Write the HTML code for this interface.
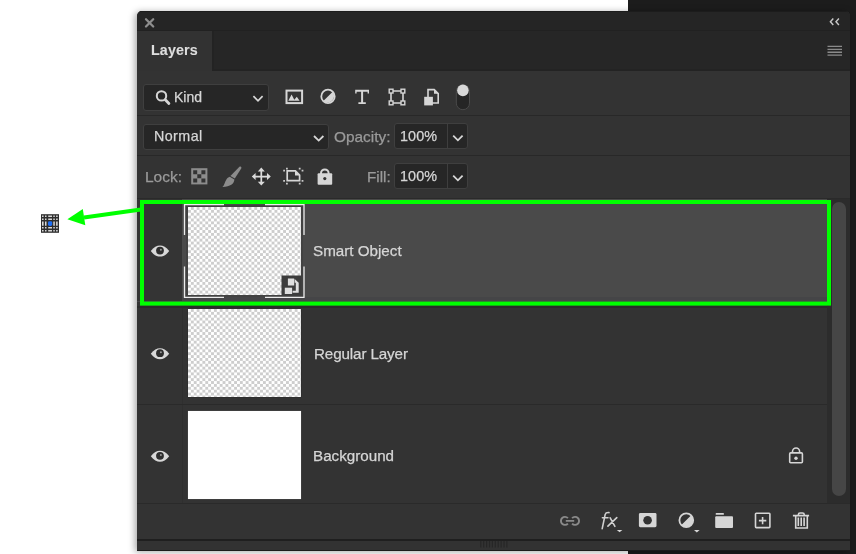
<!DOCTYPE html>
<html><head><meta charset="utf-8">
<style>
*{margin:0;padding:0;box-sizing:border-box}
html,body{width:856px;height:554px;overflow:hidden;background:#fff;font-family:"Liberation Sans",sans-serif}
.a{position:absolute}
.txt{will-change:transform;-webkit-text-stroke:0.25px #d6d6d6;color:#d6d6d6;font-size:14px;white-space:nowrap;line-height:1}
.lbl{will-change:transform;-webkit-text-stroke:0.25px #9a9a9a;color:#9a9a9a;font-size:15px;white-space:nowrap;line-height:1}
.dd{background:#262626;border:1px solid #3f3f3f;border-radius:3px}
.thumb{background:repeating-conic-gradient(#fff 0 25%,#cdcdcd 0 50%) 2.89px 0/5.78px 5.78px}
svg{position:absolute;left:0;top:0}
</style></head><body>
<!-- dark workspace on right -->
<div class="a" style="left:628px;top:0;width:228px;height:554px;background:#1c1c1c"></div>
<!-- panel shadow -->
<div class="a" style="left:137px;top:11px;width:713px;height:540px;border-radius:5px 5px 0 0;box-shadow:-2px 1px 7px rgba(0,0,0,.35)"></div>

<!-- panel -->
<div class="a" style="left:137px;top:11px;width:713px;height:539.5px;background:#333;border-radius:5px 5px 0 0;overflow:hidden">
  <!-- title bar -->
  <div class="a" style="left:0;top:0;width:713px;height:19px;background:#252525;border-top:1px solid #1c1c1c"></div>
  <div class="a" style="left:0;top:19px;width:713px;height:1px;background:#212121"></div>
  <!-- tab bar -->
  <div class="a" style="left:0;top:20px;width:713px;height:40px;background:#262626"></div>
  <div class="a" style="left:0;top:58px;width:713px;height:2px;background:#232323"></div>
  <div class="a" style="left:0;top:20px;width:75px;height:40px;background:#323232"></div>
  <div class="a" style="left:75px;top:20px;width:2px;height:40px;background:#232323"></div>

  <!-- toolbar separators -->
  <div class="a" style="left:0;top:104px;width:713px;height:1px;background:#282828"></div>
  <div class="a" style="left:0;top:144px;width:713px;height:1px;background:#282828"></div>
  <div class="a" style="left:0;top:187px;width:713px;height:1px;background:#2a2a2a"></div>

  <!-- layer list bg -->
  <div class="a" style="left:0;top:188px;width:690px;height:97.5px;background:#4a4a4a"></div>
  <div class="a" style="left:0;top:285.5px;width:690px;height:5px;background:#454547"></div>
  <div class="a" style="left:0;top:188px;width:45px;height:102px;background:#343434"></div>
  <div class="a" style="left:0;top:295px;width:690px;height:2px;background:#2b2b2b"></div>
  <div class="a" style="left:45px;top:297px;width:1px;height:96px;background:#2f2f2f"></div>
  <div class="a" style="left:0;top:393px;width:690px;height:1px;background:#2a2a2a"></div>
  <div class="a" style="left:45px;top:394px;width:1px;height:98px;background:#2f2f2f"></div>
  <div class="a" style="left:0;top:492px;width:713px;height:1px;background:#2a2a2a"></div>
  <!-- scroll track -->
  <div class="a" style="left:690px;top:188px;width:23px;height:304px;background:#2c2c2c"></div>
  <div class="a" style="left:695px;top:191px;width:14px;height:294px;background:#464646;border-radius:7px"></div>

  <!-- bottom -->
  <div class="a" style="left:0;top:527.6px;width:713px;height:2px;background:#1f1f1f"></div>
  <div class="a" style="left:0;top:529.6px;width:713px;height:10px;background:#323232"></div>
  <div class="a" style="left:0;top:538.6px;width:713px;height:1px;background:#1c1c1c"></div>
</div>

<!-- dropdowns -->
<div class="a dd" style="left:143px;top:83.6px;width:125.6px;height:27px"></div>
<div class="a dd" style="left:143px;top:124px;width:186px;height:26px"></div>
<div class="a dd" style="left:394px;top:123px;width:74px;height:26px"></div>
<div class="a" style="left:447px;top:124px;width:1px;height:24px;background:#3e3e3e"></div>
<div class="a dd" style="left:394px;top:163px;width:74px;height:26px"></div>
<div class="a" style="left:447px;top:164px;width:1px;height:24px;background:#3e3e3e"></div>

<!-- texts -->
<div class="a txt" style="left:151px;top:43.2px;font-weight:bold;font-size:14.3px;-webkit-text-stroke:0.1px #ddd;color:#dedede;letter-spacing:0.1px">Layers</div>
<div class="a txt" style="left:173.6px;top:89.6px;">Kind</div>
<div class="a txt" style="left:153.8px;top:129.4px;font-size:14.3px;letter-spacing:0.42px">Normal</div>
<div class="a lbl" style="left:334.2px;top:129.2px;font-size:15.4px">Opacity:</div>
<div class="a txt" style="left:400.2px;top:129.4px;font-size:14.4px;letter-spacing:0.1px">100%</div>
<div class="a lbl" style="left:145px;top:169px;font-size:15.5px">Lock:</div>
<div class="a lbl" style="left:367.2px;top:169px;font-size:15.2px">Fill:</div>
<div class="a txt" style="left:400.2px;top:169.2px;font-size:14.4px;letter-spacing:0.1px">100%</div>

<!-- thumbnails -->
<div class="a" style="left:185.8px;top:205px;width:117.6px;height:91.8px;background:#424242"></div>
<div class="a thumb" style="left:188px;top:207px;width:113px;height:88px"></div>
<div class="a thumb" style="left:187.8px;top:309.4px;width:113.6px;height:87.9px;box-shadow:0 0 1px #222"></div>
<div class="a" style="left:187.6px;top:411.2px;width:113.4px;height:87.8px;background:#fff;box-shadow:0 0 1px #777"></div>

<div class="a txt" style="left:313px;top:243px;font-size:15.2px">Smart Object</div>
<div class="a txt" style="left:313.5px;top:346px;font-size:15.2px;letter-spacing:-0.12px">Regular Layer</div>
<div class="a txt" style="left:313px;top:448px;font-size:15.2px">Background</div>

<svg width="856" height="554" viewBox="0 0 856 554">
  <!-- close x -->
  <path d="M146 19.3 L153.2 26.5 M153.2 19.3 L146 26.5" stroke="#8e8e8e" stroke-width="2.3" stroke-linecap="round" fill="none"/>
  <!-- << -->
  <path d="M833.3 18.6 L830.4 21.8 L833.3 25 M838.9 18.6 L836 21.8 L838.9 25" stroke="#c8c8c8" stroke-width="1.45" fill="none"/>
  <!-- hamburger -->
  <path d="M827.5 46.4 H842 M827.5 49.3 H842 M827.5 52.2 H842 M827.5 55.1 H842" stroke="#8a8a8a" stroke-width="1.35" fill="none"/>

  <!-- search -->
  <circle cx="161.5" cy="95.9" r="4.7" stroke="#d6d6d6" stroke-width="2" fill="none"/>
  <path d="M165.3 99.7 L168.9 103.4" stroke="#d6d6d6" stroke-width="2.8" stroke-linecap="round"/>
  <!-- chevrons -->
  <path d="M253.4 96.2 L258 100.8 L262.6 96.2" stroke="#d6d6d6" stroke-width="1.7" fill="none"/>
  <path d="M314 136 L318.7 140.6 L323.4 136" stroke="#d6d6d6" stroke-width="1.8" fill="none"/>
  <path d="M453.2 135.6 L457.9 140.3 L462.6 135.6" stroke="#d6d6d6" stroke-width="1.8" fill="none"/>
  <path d="M453.2 175.6 L457.9 180.3 L462.6 175.6" stroke="#d6d6d6" stroke-width="1.8" fill="none"/>

  <!-- image icon -->
  <rect x="286.5" y="90.6" width="15.6" height="12.5" stroke="#d6d6d6" stroke-width="2" fill="none"/>
  <path d="M288.3 100.8 L291.6 94.5 L294.8 100.8 Z M293.5 100.8 L296.8 96.8 L299.6 100.8 Z" fill="#d6d6d6"/>
  <!-- adjustment circle -->
  <circle cx="328" cy="96.4" r="6.7" stroke="#d6d6d6" stroke-width="1.8" fill="none"/>
  <path d="M332.7 91.7 A6.7 6.7 0 0 1 323.3 101.1 Z" fill="#d6d6d6"/>
  <!-- T -->
  <path d="M355.2 89.8 H369 V93.5 H367.6 V91.8 H363.1 V102.2 H365.8 V104 H358.4 V102.2 H361.1 V91.8 H356.6 V93.5 H355.2 Z" fill="#d6d6d6"/>
  <!-- transform -->
  <path d="M391 91 H403 V103 H391 Z" stroke="#d6d6d6" stroke-width="1.6" fill="none"/>
  <rect x="389.2" y="89.2" width="3.8" height="3.8" stroke="#d6d6d6" stroke-width="1.4" fill="#333"/>
  <rect x="401" y="89.2" width="3.8" height="3.8" stroke="#d6d6d6" stroke-width="1.4" fill="#333"/>
  <rect x="389.2" y="101" width="3.8" height="3.8" stroke="#d6d6d6" stroke-width="1.4" fill="#333"/>
  <rect x="401" y="101" width="3.8" height="3.8" stroke="#d6d6d6" stroke-width="1.4" fill="#333"/>
  <!-- smart object filter icon -->
  <path d="M428 103 V89.6 H434.2 L438.2 93.6 V103 Z" stroke="#d6d6d6" stroke-width="1.6" fill="none"/>
  <path d="M434 89.6 V93.8 H438.2 Z" fill="#d6d6d6"/>
  <rect x="424.2" y="96.8" width="8.7" height="8.6" fill="#d6d6d6"/>
  <!-- toggle -->
  <rect x="456.3" y="84.7" width="13.2" height="25" rx="6.6" fill="#252525" stroke="#4a4a4a" stroke-width="1"/>
  <circle cx="462.9" cy="90.4" r="5.8" fill="#d8d8d8"/>

  <!-- lock row icons -->
  <rect x="192.1" y="169.1" width="14.4" height="14.4" stroke="#8c8c8c" stroke-width="1.8" fill="#8c8c8c"/>
  <path d="M193.2 170.2 h4 v4 h-4 Z M201.4 170.2 h4 v4 h-4 Z M197.3 174.3 h4 v4 h-4 Z M193.2 178.4 h4 v4 h-4 Z M201.4 178.4 h4 v4 h-4 Z" fill="#333"/>
  <!-- brush -->
  <path d="M240.4 166.6 C241.4 166.8 241.6 167.6 241.2 168.4 L234.8 178.6 L230.4 176 L239.2 167 C239.6 166.7 240 166.6 240.4 166.6 Z" fill="#8c8c8c"/>
  <path d="M229.8 176.8 L234.4 179.6 C234 184 230.6 186.6 222.4 187.1 C224.6 185 224.6 181.8 226.4 179.4 C227.2 178.2 228.4 177.2 229.8 176.8 Z" fill="#8c8c8c"/>
  <!-- move -->
  <path d="M257.4 172.6 h2.8 v2.8 h-2.8 Z M262.4 172.6 h2.8 v2.8 h-2.8 Z M257.4 177.8 h2.8 v2.8 h-2.8 Z M262.4 177.8 h2.8 v2.8 h-2.8 Z" fill="#232323"/>
  <path d="M261.3 170 V183.4 M255 176.6 H267.6" stroke="#dadada" stroke-width="1.7" fill="none"/>
  <path d="M261.3 167.6 L264.8 171.4 H257.8 Z M261.3 185.6 L264.8 181.8 H257.8 Z M251.8 176.6 L255.6 173.1 V180.1 Z M270.8 176.6 L267 173.1 V180.1 Z" fill="#dadada"/>
  <!-- artboard -->
  <path d="M287.2 170.9 H295.4 L299.6 175.1 V180.7 H287.2 Z" stroke="#d6d6d6" stroke-width="1.7" fill="none"/>
  <path d="M295 170.9 L299.6 175.5 H295.6 Q295 175.5 295 174.9 Z" fill="#d6d6d6"/>
  <path d="M283.2 169.8 h1.8 v1.8 h-1.8 Z M286 167.7 h1.8 v1.8 h-1.8 Z M298.8 167.7 h1.8 v1.8 h-1.8 Z M301.6 169.8 h1.8 v1.8 h-1.8 Z M283.2 180 h1.8 v1.8 h-1.8 Z M286 182.8 h1.8 v1.8 h-1.8 Z M298.8 182.8 h1.8 v1.8 h-1.8 Z M301.6 180 h1.8 v1.8 h-1.8 Z" fill="#c8c8c8"/>
  <!-- lock -->
  <path d="M321 174 V173.2 A3.8 3.8 0 0 1 328.6 173.2 V174" stroke="#d6d6d6" stroke-width="2" fill="none"/>
  <rect x="317.6" y="173.2" width="14.6" height="11.5" rx="1" fill="#d6d6d6"/>
  <circle cx="324.8" cy="178.6" r="1.6" fill="#333"/>

  <!-- eyes -->
  <g>
    <path d="M150.8 251.1 C153.8 247.1 156.8 245.6 160 245.6 C163.2 245.6 166.2 247.1 169.2 251.1 C166.2 255.1 163.2 256.6 160 256.6 C156.8 256.6 153.8 255.1 150.8 251.1 Z" fill="#d8d8d8"/>
    <circle cx="160" cy="250.6" r="3.9" fill="#2e2e2e"/>
    <circle cx="160.9" cy="249.7" r="1" fill="#9a9a9a"/>
  </g>
  <g transform="translate(0 102.6)">
    <path d="M150.8 251.1 C153.8 247.1 156.8 245.6 160 245.6 C163.2 245.6 166.2 247.1 169.2 251.1 C166.2 255.1 163.2 256.6 160 256.6 C156.8 256.6 153.8 255.1 150.8 251.1 Z" fill="#d8d8d8"/>
    <circle cx="160" cy="250.6" r="3.9" fill="#2e2e2e"/>
    <circle cx="160.9" cy="249.7" r="1" fill="#9a9a9a"/>
  </g>
  <g transform="translate(0 205.2)">
    <path d="M150.8 251.1 C153.8 247.1 156.8 245.6 160 245.6 C163.2 245.6 166.2 247.1 169.2 251.1 C166.2 255.1 163.2 256.6 160 256.6 C156.8 256.6 153.8 255.1 150.8 251.1 Z" fill="#d8d8d8"/>
    <circle cx="160" cy="250.6" r="3.9" fill="#2e2e2e"/>
    <circle cx="160.9" cy="249.7" r="1" fill="#9a9a9a"/>
  </g>

  <!-- smart object brackets -->
  <path d="M184.5 235 V204.5 H224 M265 204.5 H304 V235 M304 266.6 V297.4 H265 M224 297.4 H184.5 V266.6" stroke="#ececec" stroke-width="1.3" fill="none"/>
  <!-- badge -->
  <rect x="281.5" y="275.5" width="20" height="20" fill="#3c3c3c"/>
  <path d="M287.9 278.6 H294.2 V285.6 H287.9 Z M294.7 279 V282.8 H298.7 Z M295.8 282.8 H298.7 V292.7 H292.6 V290.8 H295.8 Z" fill="#dedede"/>
  <rect x="284.8" y="287.7" width="7.3" height="6.3" fill="#dedede"/>

  <!-- background lock -->
  <path d="M792.5 453 V451.6 A3.55 3.55 0 0 1 799.6 451.6 V453" stroke="#d6d6d6" stroke-width="1.6" fill="none"/>
  <rect x="789.7" y="452.9" width="12.7" height="9.9" rx="1" stroke="#d6d6d6" stroke-width="1.6" fill="none"/>
  <circle cx="796" cy="458.2" r="1.7" fill="#d6d6d6"/>

  <!-- bottom icons -->
  <!-- link -->
  <path d="M567.9 518.2 A4 4 0 1 0 567.9 523.6 M572.1 518.2 A4 4 0 1 1 572.1 523.6 M565.8 520.9 H574.2" stroke="#8a8a8a" stroke-width="1.9" fill="none"/>
  <!-- fx -->
  <path d="M602.2 528.6 L605.2 514.4 C605.6 513 606.6 512.4 609 512.6 M602.4 517.7 H608 M610.2 517.8 L614.9 526.3 M616.8 517.6 L607.9 526.1" stroke="#d0d0d0" stroke-width="1.6" fill="none" stroke-linecap="round"/>
  <path d="M616.8 529.9 H622.4 L619.6 532.3 Z" fill="#d6d6d6"/>
  <!-- mask -->
  <rect x="638.9" y="513.1" width="17.6" height="14.1" rx="1.4" fill="#d6d6d6"/>
  <circle cx="647.6" cy="520.2" r="4.3" fill="#333"/>
  <!-- adjustment -->
  <circle cx="686.3" cy="520.2" r="6.9" stroke="#d6d6d6" stroke-width="1.8" fill="none"/>
  <path d="M691.2 515.3 A6.9 6.9 0 0 1 681.4 525.1 Z" fill="#d6d6d6"/>
  <path d="M694 530 H699.6 L696.8 532.4 Z" fill="#d6d6d6"/>
  <!-- folder -->
  <rect x="715.2" y="516.3" width="17.8" height="11.7" rx="1" fill="#d6d6d6"/>
  <rect x="715.7" y="513" width="8.2" height="1.8" rx="0.6" fill="#d6d6d6"/>
  <!-- new layer -->
  <rect x="755.5" y="513.3" width="14.4" height="14.3" rx="0.8" stroke="#d6d6d6" stroke-width="1.6" fill="none"/>
  <path d="M762.6 517 V524.2 M758.9 520.6 H766.3" stroke="#d6d6d6" stroke-width="1.6"/>
  <!-- trash -->
  <path d="M792.9 515.6 H809.1 M798.4 515.6 V514.6 Q798.4 513 800 513 H802.6 Q804.2 513 804.2 514.6 V515.6" stroke="#d6d6d6" stroke-width="1.6" fill="none"/>
  <path d="M795.7 516 V528 H807.3 V516" stroke="#d6d6d6" stroke-width="1.6" fill="none"/>
  <path d="M798.3 517.4 V526 M801.2 517.4 V526 M804.1 517.4 V526" stroke="#d6d6d6" stroke-width="1.6"/>
  <!-- resize grip -->
  <path d="M480.8 541 V547.5 M483.7 541 V547.5 M486.6 541 V547.5 M489.5 541 V547.5 M492.4 541 V547.5 M495.3 541 V547.5 M498.2 541 V547.5 M501.1 541 V547.5 M504.0 541 V547.5 M506.9 541 V547.5" stroke="#262626" stroke-width="1.1"/>

  <!-- left icon -->
  <rect x="41" y="214.2" width="18" height="18.6" fill="#2e2e2e"/>
  <path d="M42 215.4 h1.6 v1.6 h-1.6 Z M45 215.4 h1.5 v1.6 h-1.5 Z M48.2 215.4 h3.8 v1.6 h-3.8 Z M53.3 215.4 h1.5 v1.6 h-1.5 Z M56.1 215.4 h1.6 v1.6 h-1.6 Z M42 218.5 h1.6 v1.5 h-1.6 Z M45 218.5 h1.5 v1.5 h-1.5 Z M48.2 218.5 h3.8 v1.5 h-3.8 Z M53.3 218.5 h1.5 v1.5 h-1.5 Z M56.1 218.5 h1.6 v1.5 h-1.6 Z M42 221.5 h1.6 v4.2 h-1.6 Z M45 221.5 h1.5 v4.2 h-1.5 Z M53.3 221.5 h1.5 v4.2 h-1.5 Z M56.1 221.5 h1.6 v4.2 h-1.6 Z M42 227.1 h1.6 v1.5 h-1.6 Z M45 227.1 h1.5 v1.5 h-1.5 Z M48.2 227.1 h3.8 v1.5 h-3.8 Z M53.3 227.1 h1.5 v1.5 h-1.5 Z M56.1 227.1 h1.6 v1.5 h-1.6 Z M42 230 h1.6 v1.6 h-1.6 Z M45 230 h1.5 v1.6 h-1.5 Z M48.2 230 h3.8 v1.6 h-3.8 Z M53.3 230 h1.5 v1.6 h-1.5 Z M56.1 230 h1.6 v1.6 h-1.6 Z" fill="#d8d8d8"/>
  <rect x="48" y="221.2" width="4.2" height="4.8" rx="1.4" fill="#1f6ff5"/>

  <!-- green box + arrow -->
  <rect x="142" y="202" width="687" height="101.6" stroke="#00ff00" stroke-width="4" fill="none"/>
  <path d="M141 209.4 L84 217.4" stroke="#00ff00" stroke-width="4"/>
  <path d="M67.4 219.3 L82.8 208.9 L85.3 225.3 Z" fill="#00ff00"/>
</svg>
</body></html>
